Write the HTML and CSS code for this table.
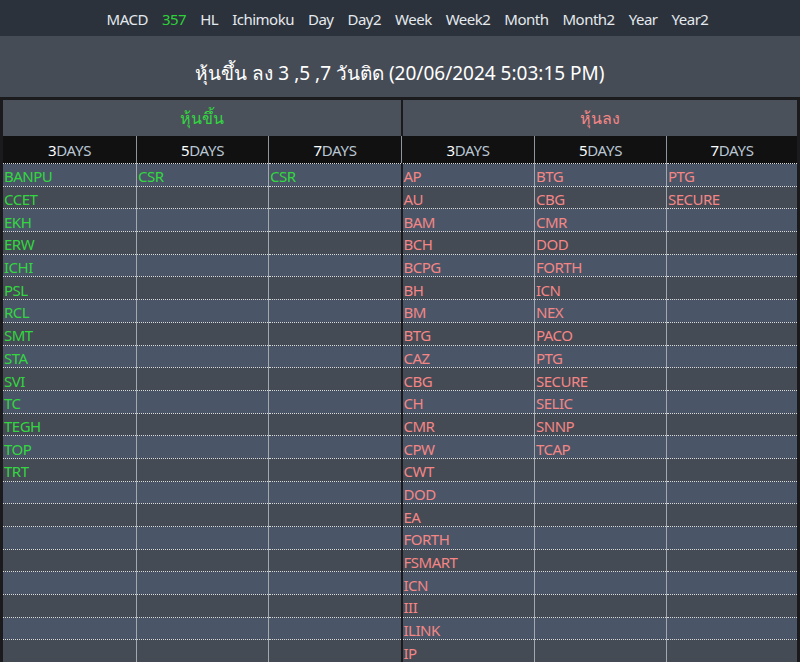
FILE: index.html
```html
<!DOCTYPE html>
<html lang="th">
<head>
<meta charset="utf-8">
<title>MACD 357</title>
<link rel="stylesheet" href="styles.css">
</head>
<body>
<nav class="nav">
  <a>MACD</a><a class="active">357</a><a>HL</a><a>Ichimoku</a><a>Day</a><a>Day2</a><a>Week</a><a>Week2</a><a>Month</a><a>Month2</a><a>Year</a><a>Year2</a>
</nav>
<h1 class="title">หุ้นขึ้น ลง 3 ,5 ,7 วันติด (20/06/2024 5:03:15 PM)</h1>
<table class="grid">
  <colgroup><col class="c1"><col class="c2"><col class="c3"><col class="c4"><col class="c5"><col class="c6"></colgroup>
  <thead>
    <tr class="group">
      <th colspan="3" class="up">หุ้นขึ้น</th>
      <th colspan="3" class="down split">หุ้นลง</th>
    </tr>
    <tr class="days">
      <th><span class="n">3</span>DAYS</th><th><span class="n">5</span>DAYS</th><th><span class="n">7</span>DAYS</th>
      <th class="split"><span class="n">3</span>DAYS</th><th><span class="n">5</span>DAYS</th><th><span class="n">7</span>DAYS</th>
    </tr>
  </thead>
  <tbody>
    <tr><td class="up">BANPU</td><td class="up">CSR</td><td class="up">CSR</td><td class="down split">AP</td><td class="down">BTG</td><td class="down">PTG</td></tr>
    <tr><td class="up">CCET</td><td></td><td></td><td class="down split">AU</td><td class="down">CBG</td><td class="down">SECURE</td></tr>
    <tr><td class="up">EKH</td><td></td><td></td><td class="down split">BAM</td><td class="down">CMR</td><td></td></tr>
    <tr><td class="up">ERW</td><td></td><td></td><td class="down split">BCH</td><td class="down">DOD</td><td></td></tr>
    <tr><td class="up">ICHI</td><td></td><td></td><td class="down split">BCPG</td><td class="down">FORTH</td><td></td></tr>
    <tr><td class="up">PSL</td><td></td><td></td><td class="down split">BH</td><td class="down">ICN</td><td></td></tr>
    <tr><td class="up">RCL</td><td></td><td></td><td class="down split">BM</td><td class="down">NEX</td><td></td></tr>
    <tr><td class="up">SMT</td><td></td><td></td><td class="down split">BTG</td><td class="down">PACO</td><td></td></tr>
    <tr><td class="up">STA</td><td></td><td></td><td class="down split">CAZ</td><td class="down">PTG</td><td></td></tr>
    <tr><td class="up">SVI</td><td></td><td></td><td class="down split">CBG</td><td class="down">SECURE</td><td></td></tr>
    <tr><td class="up">TC</td><td></td><td></td><td class="down split">CH</td><td class="down">SELIC</td><td></td></tr>
    <tr><td class="up">TEGH</td><td></td><td></td><td class="down split">CMR</td><td class="down">SNNP</td><td></td></tr>
    <tr><td class="up">TOP</td><td></td><td></td><td class="down split">CPW</td><td class="down">TCAP</td><td></td></tr>
    <tr><td class="up">TRT</td><td></td><td></td><td class="down split">CWT</td><td></td><td></td></tr>
    <tr><td></td><td></td><td></td><td class="down split">DOD</td><td></td><td></td></tr>
    <tr><td></td><td></td><td></td><td class="down split">EA</td><td></td><td></td></tr>
    <tr><td></td><td></td><td></td><td class="down split">FORTH</td><td></td><td></td></tr>
    <tr><td></td><td></td><td></td><td class="down split">FSMART</td><td></td><td></td></tr>
    <tr><td></td><td></td><td></td><td class="down split">ICN</td><td></td><td></td></tr>
    <tr><td></td><td></td><td></td><td class="down split">III</td><td></td><td></td></tr>
    <tr><td></td><td></td><td></td><td class="down split">ILINK</td><td></td><td></td></tr>
    <tr><td></td><td></td><td></td><td class="down split">IP</td><td></td><td></td></tr>
  </tbody>
</table>
</body>
</html>
```
FILE: styles.css
```css
html, body {
  margin: 0;
  padding: 0;
  background: #464c56;
  font-family: "Noto Sans", "DejaVu Sans", sans-serif;
  color: #e6ebf0;
}
.nav {
  height: 36px;
  background: #2c323b;
  display: flex;
  justify-content: center;
  align-items: center;
  gap: 14px;
  font-size: 15px;
  letter-spacing: -0.5px;
  padding-top: 2px;
  padding-left: 15px;
  box-sizing: border-box;
}
.nav a {
  color: #e4e9ee;
}
.nav a.active {
  color: #2ed13a;
}
.title {
  margin: 0;
  height: 61px;
  display: flex;
  align-items: center;
  justify-content: center;
  padding-top: 12px;
  box-sizing: border-box;
  font-size: 19px;
  font-weight: normal;
  color: #ffffff;
  background: #464c56;
}
.grid {
  width: 100%;
  table-layout: fixed;
  border-collapse: collapse;
  border-top: 3px solid #1b1b1d;
  border-left: 3px solid #1b1b1d;
  border-right: 3px solid #1b1b1d;
}
.c1 { width: 135px; }
.c2 { width: 132px; }
.c3 { width: 133px; }
.c4 { width: 133px; }
.c5 { width: 132px; }
.group th {
  height: 36px;
  background: #4a515b;
  font-size: 16px;
  font-weight: normal;
  padding: 0;
}
.group th.split {
  border-left: 2px solid #1b1b1d;
}
.days th {
  height: 27px;
  background: #111112;
  font-size: 15px;
  letter-spacing: -0.3px;
  font-weight: normal;
  color: #b9c6d2;
  padding: 0;
  border-left: 1px solid #8f959c;
}
.days th:first-child {
  border-left: none;
}
.days .n {
  color: #ffffff;
}
.up { color: #33d640; }
.down { color: #f48686; }
td {
  height: 18.7px;
  padding: 3px 0 0 1px;
  font-size: 15px;
  letter-spacing: -0.5px;
  line-height: 18px;
  border-top: 1px dotted #d9dde2;
  border-bottom: 1px dotted #d9dde2;
  border-left: 1px solid #a3a8ae;
  vertical-align: middle;
  white-space: nowrap;
  overflow: hidden;
}
td:first-child {
  border-left: none;
}
td.split {
  border-left: 2px solid #1b1b1d;
}
tbody tr:nth-child(odd) td { background: #4a5667; }
tbody tr:nth-child(even) td { background: #454b55; }
```
